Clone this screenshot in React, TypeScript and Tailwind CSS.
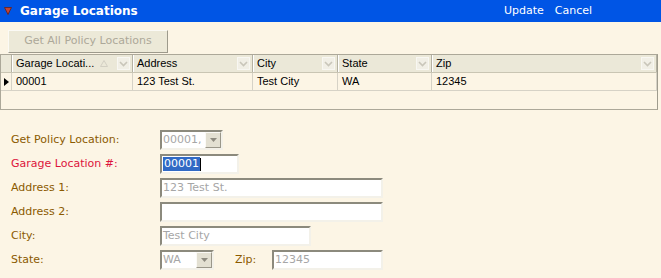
import React from 'react'

const verdana = { fontFamily: '"DejaVu Sans", Verdana, sans-serif' }
const tahoma = { fontFamily: '"Liberation Sans", Arial, sans-serif' }

const columns = [
  { key: 'loc', label: 'Garage Locati...', width: 'w-[121px]', sort: true },
  { key: 'addr', label: 'Address', width: 'w-[120px]' },
  { key: 'city', label: 'City', width: 'w-[85px]' },
  { key: 'state', label: 'State', width: 'w-[94px]' },
  { key: 'zip', label: 'Zip', width: 'flex-1' },
]

const row = ['00001', '123 Test St.', 'Test City', 'WA', '12345']

function Chevron() {
  return (
    <svg width="9" height="6" viewBox="0 0 9 6">
      <path d="M1 1 L4.5 4.5 L8 1" fill="none" stroke="#C9C6BA" strokeWidth="1.6" />
    </svg>
  )
}

function HeaderDrop() {
  return (
    <span className="ml-auto mr-[2px] flex h-[13px] w-[13px] items-center justify-center border border-[#F8F7F2] bg-[#F1EFE6]">
      <Chevron />
    </span>
  )
}

function ComboArrow() {
  return (
    <span className="flex h-full w-[16px] items-center justify-center border border-t-[#FBFAF6] border-l-[#FBFAF6] border-b-[#9A978A] border-r-[#9A978A] bg-[#E3E0D2]">
      <svg width="7" height="4" viewBox="0 0 7 4">
        <path d="M0 0 H7 L3.5 4 Z" fill="#8E8B80" />
      </svg>
    </span>
  )
}

function Field({ value, w, disabled, selected }: { value?: string; w: string; disabled?: boolean; selected?: boolean }) {
  return (
    <div
      className={`${w} flex h-[20px] items-center border-2 border-t-[#8C8A7D] border-l-[#8C8A7D] border-b-[#F3F1E9] border-r-[#F3F1E9] bg-white px-[1px] text-[11px] ${disabled ? 'text-[#A6A6A6]' : 'text-black'}`}
      style={verdana}
    >
      {selected ? (
        <span className="bg-[#316AC5] px-[1px] leading-[14px] text-white">{value}</span>
      ) : (
        value
      )}
      {selected && <span className="h-[13px] w-[1px] bg-black" />}
    </div>
  )
}

function Combo({ value, w }: { value: string; w: string }) {
  return (
    <div
      className={`${w} flex h-[20px] items-stretch border-2 border-t-[#8C8A7D] border-l-[#8C8A7D] border-b-[#F3F1E9] border-r-[#F3F1E9] bg-white text-[11px] text-[#A6A6A6]`}
      style={verdana}
    >
      <span className="flex-1 whitespace-nowrap pl-[1px] leading-[16px]">{value}</span>
      <ComboArrow />
    </div>
  )
}

function Label({ text, red }: { text: string; red?: boolean }) {
  return (
    <div className={`flex h-[20px] items-center text-[11px] ${red ? 'text-[#DC143C]' : 'text-[#8B5A00]'}`} style={verdana}>
      {text}
    </div>
  )
}

export default function App() {
  return (
    <div className="h-[278px] w-[661px] overflow-hidden bg-[#FCF5E5]">
      {/* title bar */}
      <div className="flex h-[22px] items-center bg-[#0055E5] text-white">
        <svg className="ml-[4px]" width="8" height="8" viewBox="0 0 8 8">
          <path d="M0.5 0.5 H7.5 L4 7.5 Z" fill="#C0453A" stroke="#6A1E18" strokeWidth="0.8" />
        </svg>
        <span className="ml-[8px] text-[12px] font-bold" style={verdana}>
          Garage Locations
        </span>
        <div className="ml-auto mr-[69px] flex gap-[11px] text-[11px]" style={verdana}>
          <span>Update</span>
          <span>Cancel</span>
        </div>
      </div>

      {/* get all button */}
      <div className="ml-[8px] mt-[8px] flex h-[23px] w-[160px] items-center justify-center border border-t-[#FBFAF5] border-l-[#FBFAF5] border-b-[#9D9A8C] border-r-[#9D9A8C] bg-[#ECE9D8] text-[11px] text-[#ACA899]" style={verdana}>
        Get All Policy Locations
      </div>

      {/* grid */}
      <div className="mt-[1px] h-[56px] w-[658px] border border-[#ACA899] border-r-[#9F9C8E]" style={tahoma}>
        <div className="flex h-[18px] border-b border-[#C9C5B3] bg-[#EBE8D8] text-[11px] text-black">
          <div className="w-[11px] border-r border-[#B5B2A3]" />
          {columns.map((c) => (
            <div key={c.key} className={`${c.width} flex items-center border-l border-l-white border-r border-r-[#B5B2A3] pl-[3px]`}>
              <span className="whitespace-nowrap">{c.label}</span>
              {c.sort && (
                <svg className="ml-auto mr-[3px]" width="8" height="7" viewBox="0 0 8 7">
                  <path d="M4 0.5 L7.5 6.5 H0.5 Z" fill="none" stroke="#D2CFC2" strokeWidth="1" />
                </svg>
              )}
              <span className={c.sort ? '' : 'ml-auto'} />
              <HeaderDrop />
            </div>
          ))}
        </div>
        <div className="flex h-[18px] border-b border-[#D6D2C6] text-[11px] text-black">
          <div className="flex w-[11px] items-center justify-center border-r border-[#D6D2C6]">
            <svg width="5" height="8" viewBox="0 0 5 8">
              <path d="M0 0 L5 4 L0 8 Z" fill="#000" />
            </svg>
          </div>
          {columns.map((c, i) => (
            <div key={c.key} className={`${c.width} flex items-center border-l border-l-transparent border-r border-r-[#D6D2C6] pl-[3px]`}>
              {row[i]}
            </div>
          ))}
        </div>
      </div>

      {/* form */}
      <div className="mt-[20px] grid grid-cols-[149px_1fr] gap-y-[4px] pl-[11px]">
        <Label text="Get Policy Location:" />
        <Combo value="00001," w="w-[63px]" />
        <Label text="Garage Location #:" red />
        <Field value="00001" w="w-[79px]" selected />
        <Label text="Address 1:" />
        <Field value="123 Test St." w="w-[223px]" disabled />
        <Label text="Address 2:" />
        <Field w="w-[223px]" />
        <Label text="City:" />
        <Field value="Test City" w="w-[151px]" disabled />
        <Label text="State:" />
        <div className="flex items-center">
          <Combo value="WA" w="w-[54px]" />
          <span className="ml-[21px] w-[37px]">
            <Label text="Zip:" />
          </span>
          <Field value="12345" w="w-[111px]" disabled />
        </div>
      </div>
    </div>
  )
}
